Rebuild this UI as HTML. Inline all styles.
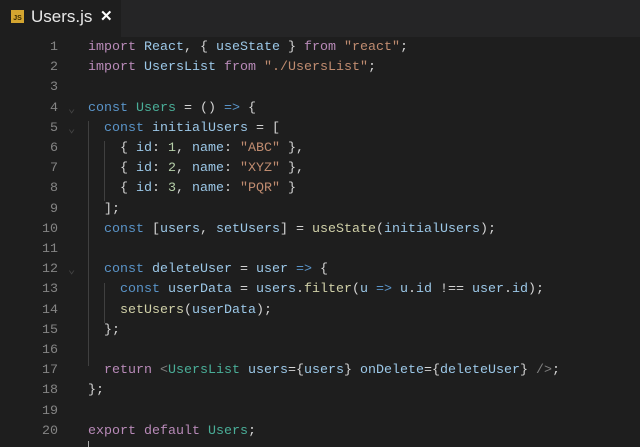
<!DOCTYPE html><html><head><style>
body{margin:0;width:640px;height:447px;background:#1e1e1e;overflow:hidden;font-family:"Liberation Mono",monospace;}
.bar{position:absolute;left:0;top:0;width:640px;height:37px;background:#252526;}
.tab{position:absolute;left:0;top:0;width:121px;height:37px;background:#1e1e1e;}
.js{position:absolute;left:11px;top:10px;width:13px;height:13px;background:#d4a530;color:#3a2a00;font:bold 7px "Liberation Sans",sans-serif;text-align:center;line-height:17px;}
.tn{position:absolute;left:31px;top:7px;color:#e8e8e8;font:17px "Liberation Sans",sans-serif;}
.x{position:absolute;left:100px;top:7px;color:#fff;font:bold 15px "Liberation Sans",sans-serif;}
.ln{position:absolute;left:0;width:58px;text-align:right;color:#858585;font-size:13.33px;}
.cd{position:absolute;left:88px;white-space:pre;color:#d4d4d4;font-size:13.33px;}
.k{color:#b88ab8}.b{color:#5a94c8}.v{color:#9cc8e8}.t{color:#4aae98}.s{color:#c08c70}.f{color:#d0d0a8}.n{color:#b5cea8}.g{color:#808080}
.gd{position:absolute;width:1px;background:#404040;}
.ch{position:absolute;left:68px;color:#444;font-size:12px;}
</style></head><body>
<div class="bar"><div class="tab"><div class="js">JS</div><div class="tn">Users.js</div><div class="x">✕</div></div></div>
<div class="gd" style="left:88px;top:121px;height:245px"></div>
<div class="gd" style="left:104px;top:141px;height:60px"></div>
<div class="gd" style="left:104px;top:283px;height:40px"></div>
<div id="c"></div>
<script>
var L=[
'<span class="k">import</span> <span class="v">React</span>, { <span class="v">useState</span> } <span class="k">from</span> <span class="s">"react"</span>;',
'<span class="k">import</span> <span class="v">UsersList</span> <span class="k">from</span> <span class="s">"./UsersList"</span>;',
'',
'<span class="b">const</span> <span class="t">Users</span> = () <span class="b">=&gt;</span> {',
'  <span class="b">const</span> <span class="v">initialUsers</span> = [',
'    { <span class="v">id</span>: <span class="n">1</span>, <span class="v">name</span>: <span class="s">"ABC"</span> },',
'    { <span class="v">id</span>: <span class="n">2</span>, <span class="v">name</span>: <span class="s">"XYZ"</span> },',
'    { <span class="v">id</span>: <span class="n">3</span>, <span class="v">name</span>: <span class="s">"PQR"</span> }',
'  ];',
'  <span class="b">const</span> [<span class="v">users</span>, <span class="v">setUsers</span>] = <span class="f">useState</span>(<span class="v">initialUsers</span>);',
'',
'  <span class="b">const</span> <span class="v">deleteUser</span> = <span class="v">user</span> <span class="b">=&gt;</span> {',
'    <span class="b">const</span> <span class="v">userData</span> = <span class="v">users</span>.<span class="f">filter</span>(<span class="v">u</span> <span class="b">=&gt;</span> <span class="v">u</span>.<span class="v">id</span> !== <span class="v">user</span>.<span class="v">id</span>);',
'    <span class="f">setUsers</span>(<span class="v">userData</span>);',
'  };',
'',
'  <span class="k">return</span> <span class="g">&lt;</span><span class="t">UsersList</span> <span class="v">users</span>={<span class="v">users</span>} <span class="v">onDelete</span>={<span class="v">deleteUser</span>} <span class="g">/&gt;</span>;',
'};',
'',
'<span class="k">export</span> <span class="k">default</span> <span class="t">Users</span>;'];
var h='';for(var i=0;i<L.length;i++){var y=40+i*20.2;h+='<div class="ln" style="top:'+y+'px">'+(i+1)+'</div><div class="cd" style="top:'+y+'px">'+L[i]+'</div>';if(i==3||i==4||i==11)h+='<div class="ch" style="top:'+(y)+'px">⌄</div>';}
document.getElementById('c').innerHTML=h;
</script>
<div style="position:absolute;left:88px;top:441px;width:1px;height:6px;background:#aaa"></div>
</body></html>
